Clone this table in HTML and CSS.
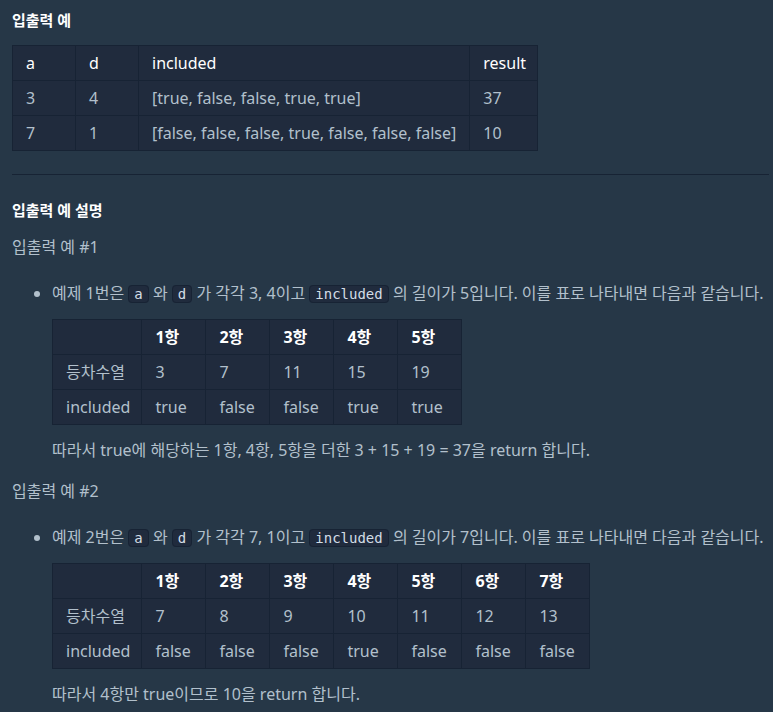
FILE: index.html
```html
<!DOCTYPE html>
<html lang="ko">
<head>
<meta charset="utf-8">
<link rel="stylesheet" href="styles.css">
</head>
<body>
<div class="content">
  <h5 class="heading">입출력 예</h5>
  <table class="tbl tbl-main">
    <thead>
      <tr><th>a</th><th>d</th><th>included</th><th>result</th></tr>
    </thead>
    <tbody>
      <tr><td>3</td><td>4</td><td>[true, false, false, true, true]</td><td>37</td></tr>
      <tr><td>7</td><td>1</td><td>[false, false, false, true, false, false, false]</td><td>10</td></tr>
    </tbody>
  </table>
  <hr class="sep">
  <h5 class="heading heading-2">입출력 예 설명</h5>
  <p class="sub">입출력 예 #1</p>
  <ul class="list">
    <li>
      <p class="item">예제 1번은 <code>a</code> 와 <code>d</code> 가 각각 3, 4이고 <code>included</code> 의 길이가 5입니다. 이를 표로 나타내면 다음과 같습니다.</p>
      <table class="tbl tbl-ex">
        <thead>
          <tr><th></th><th>1항</th><th>2항</th><th>3항</th><th>4항</th><th>5항</th></tr>
        </thead>
        <tbody>
          <tr><td>등차수열</td><td>3</td><td>7</td><td>11</td><td>15</td><td>19</td></tr>
          <tr><td>included</td><td>true</td><td>false</td><td>false</td><td>true</td><td>true</td></tr>
        </tbody>
      </table>
      <p class="after">따라서 true에 해당하는 1항, 4항, 5항을 더한 3 + 15 + 19 = 37을 return 합니다.</p>
    </li>
  </ul>
  <p class="sub sub-2">입출력 예 #2</p>
  <ul class="list">
    <li>
      <p class="item">예제 2번은 <code>a</code> 와 <code>d</code> 가 각각 7, 1이고 <code>included</code> 의 길이가 7입니다. 이를 표로 나타내면 다음과 같습니다.</p>
      <table class="tbl tbl-ex">
        <thead>
          <tr><th></th><th>1항</th><th>2항</th><th>3항</th><th>4항</th><th>5항</th><th>6항</th><th>7항</th></tr>
        </thead>
        <tbody>
          <tr><td>등차수열</td><td>7</td><td>8</td><td>9</td><td>10</td><td>11</td><td>12</td><td>13</td></tr>
          <tr><td>included</td><td>false</td><td>false</td><td>false</td><td>true</td><td>false</td><td>false</td><td>false</td></tr>
        </tbody>
      </table>
      <p class="after">따라서 4항만 true이므로 10을 return 합니다.</p>
    </li>
  </ul>
</div>
</body>
</html>
```

FILE: styles.css
```css
html, body {
  margin: 0;
  padding: 0;
  background: #263747;
}
body {
  font-family: "Noto Sans", "Noto Sans CJK KR", sans-serif;
  font-size: 16px;
  line-height: 24px;
  color: #b2c0cc;
}
.content {
  padding: 8px 4px 20px 12px;
}
.heading {
  margin: 0;
  font-size: 15px;
  font-weight: 700;
  color: #ffffff;
  line-height: 24px;
}
.heading-2 {
  margin-top: 23px;
}
.tbl {
  border-collapse: collapse;
  background: #202b3d;
  border: 1px solid #172334;
}
.tbl th, .tbl td {
  border: 1px solid #172334;
  padding: 5px 13px;
  width: 36px;
  text-align: left;
  white-space: nowrap;
  line-height: 24px;
}
.tbl th {
  color: #ffffff;
  font-weight: 400;
}
.tbl-main {
  margin-top: 13px;
}
.tbl-main th:last-child, .tbl-main td:last-child {
  padding-right: 11px;
}
.tbl-ex th {
  font-weight: 700;
}
.tbl-ex th, .tbl-ex td {
  width: 37px;
}
.tbl-ex th:first-child, .tbl-ex td:first-child {
  padding-right: 11px;
}
.tbl-ex {
  margin-top: 14px;
}
.sep {
  margin: 23px 0 0 0;
  border: 0;
  border-top: 1px solid #172334;
  height: 0;
}
.sub {
  margin: 13px 0 0 0;
}
.sub-2 {
  margin-top: 17px;
}
.list {
  margin: 22px 0 0 0;
  padding-left: 40px;
}
.item {
  margin: 0;
}
.after {
  margin: 13px 0 0 0;
}
code {
  font-family: "DejaVu Sans Mono", monospace;
  font-size: 14px;
  line-height: 20px;
  padding: 0 5px;
  background: #202b3d;
  border: 1px solid #172334;
  border-radius: 4px;
  color: #d3dde6;
}
```
